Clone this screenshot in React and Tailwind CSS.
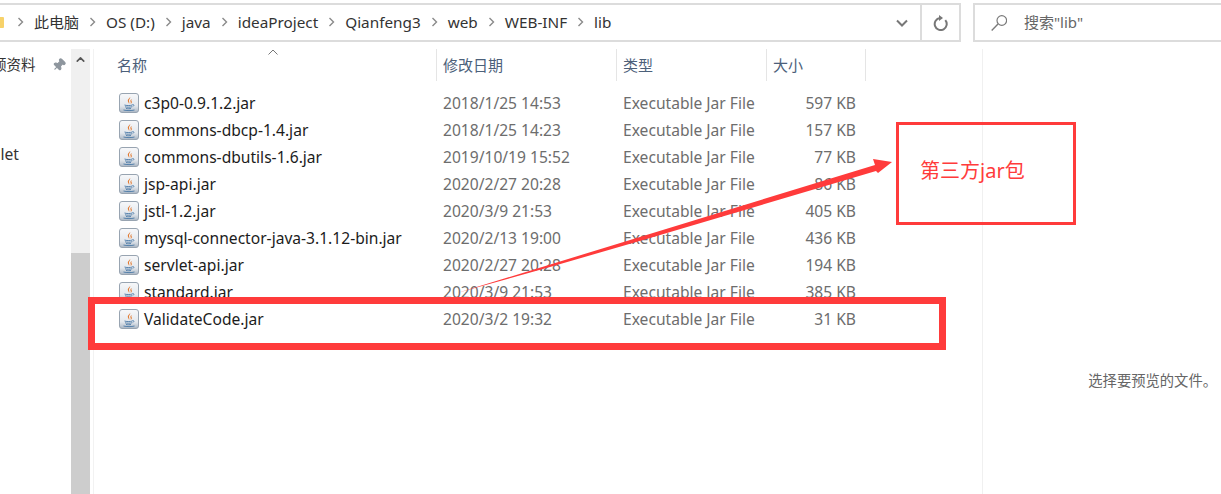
import { ChevronUp, Pin } from "lucide-react";

const files = [
  { name: "c3p0-0.9.1.2.jar", date: "2018/1/25 14:53", size: "597 KB" },
  { name: "commons-dbcp-1.4.jar", date: "2018/1/25 14:23", size: "157 KB" },
  { name: "commons-dbutils-1.6.jar", date: "2019/10/19 15:52", size: "77 KB" },
  { name: "jsp-api.jar", date: "2020/2/27 20:28", size: "86 KB" },
  { name: "jstl-1.2.jar", date: "2020/3/9 21:53", size: "405 KB" },
  { name: "mysql-connector-java-3.1.12-bin.jar", date: "2020/2/13 19:00", size: "436 KB" },
  { name: "servlet-api.jar", date: "2020/2/27 20:28", size: "194 KB" },
  { name: "standard.jar", date: "2020/3/9 21:53", size: "385 KB" },
  { name: "ValidateCode.jar", date: "2020/3/2 19:32", size: "31 KB" },
];

const crumbs = ["OS (D:)", "java", "ideaProject", "Qianfeng3", "web", "WEB-INF", "lib"];

function Crumb() {
  return (
    <span className="flex w-[27px] justify-center">
      <svg width="7" height="10" viewBox="0 0 7 10" fill="none" stroke="#8a8a8a" strokeWidth="1.4">
        <path d="M1.5 1l4 4-4 4" />
      </svg>
    </span>
  );
}

function JarIcon() {
  return (
    <svg width="20" height="20" viewBox="0 0 20 20" className="shrink-0">
      <defs>
        <linearGradient id="jarbg" x1="0" y1="0" x2="0" y2="1">
          <stop offset="0" stopColor="#f7f8fa" />
          <stop offset="0.65" stopColor="#e4e8ed" />
          <stop offset="1" stopColor="#aab6c4" />
        </linearGradient>
      </defs>
      <rect x="0.5" y="0.5" width="19" height="19" rx="2.5" fill="url(#jarbg)" stroke="#98a4b1" />
      <path d="M11 3c1 2-3 3-2 5.500 .4 1 1 1.500 1 2.500 1-1.500-.5-2.500 0-4 .4-1.200 1.800-2 1-4zM13 6c-1.500 .8-2 1.500-1.300 3 .3 .7 .2 1.300-.2 2 1.500-1 1.500-2 1-3-.4-.8-.2-1.300 .5-2z" fill="#e2762a" />
      <path d="M5.500 12c1.500 .7 6 .7 8 0M6 13.800c1.500 .5 5 .5 7 0M7 15.500c1.500 .3 4 .3 5 0M4.500 17c3 .8 8 .8 11 0M13.500 11.500c1.500-.3 2 1.300 .2 2" fill="none" stroke="#4a78a6" strokeWidth="0.9" />
    </svg>
  );
}

export default function App() {
  return (
    <div className="relative h-[494px] w-[1221px] overflow-hidden bg-white font-['Noto_Sans','Noto_Sans_CJK_SC',sans-serif] text-[15px]">
      {/* address + search */}
      <div className="flex h-[42px] pt-[3px] text-[#333]">
        <div className="flex w-[961px] items-center border-y-2 border-r-2 border-[#dcdcdc]">
          <div className="h-[11px] w-[4px] rounded-r-[1px] bg-[#f7d26a]"></div>
          <div className="ml-[3px] flex items-center">
            <Crumb />
            <span className="leading-none">此电脑</span>
            <Crumb />
            {crumbs.map((c, i) => (
              <div key={c} className="flex items-center text-[15.3px] leading-none">
                <span>{c}</span>
                {i < crumbs.length - 1 && <Crumb />}
              </div>
            ))}
          </div>
          <div className="ml-auto flex h-full items-center">
            <svg width="12" height="8" viewBox="0 0 12 8" fill="none" stroke="#777" strokeWidth="2" className="mr-[12px]">
              <path d="M1 1.500l5 5 5-5" />
            </svg>
            <div className="flex h-full w-[39px] items-center justify-center border-l-2 border-[#dcdcdc]">
              <svg width="16" height="16" viewBox="0 0 16 16" fill="none" stroke="#777" strokeWidth="2">
                <path d="M12.300 5.200A6 6 0 1 1 7 3.100" />
                <polygon points="6,0 10,3 6,6" fill="#777" stroke="none" />
              </svg>
            </div>
          </div>
        </div>
        <div className="ml-[12px] flex flex-1 items-center border-y-2 border-l-2 border-[#dcdcdc] pl-[16px] text-[#666]">
          <svg width="16" height="16" viewBox="0 0 16 16" fill="none" stroke="#7a7a7a" strokeWidth="1.2">
            <circle cx="10.800" cy="5.500" r="4.800" />
            <path d="M7 9L.700 15.400" strokeWidth="1.400" />
          </svg>
          <span className="ml-[17px]">搜索"lib"</span>
        </div>
      </div>

      <div className="flex h-[452px]">
        {/* nav pane, clipped */}
        <div className="w-[71px] overflow-hidden text-[#333]">
          <div className="mt-[12px] flex h-[22px] items-center">
            <span className="-ml-[8px] w-[60px] shrink-0 whitespace-nowrap text-[14.5px]">频资料</span>
            <Pin size={14} className="shrink-0 rotate-45 fill-[#8e969e] text-[#8e969e]" />
          </div>
          <div className="mt-[68px] flex h-[22px] w-[19px] items-center justify-end text-[15.6px]">let</div>
        </div>

        <div className="mt-[7px] flex w-[19px] flex-col bg-[#f0f0f0]">
          <div className="flex h-[204px] justify-center pt-[4px]">
            <ChevronUp size={13} strokeWidth={3} className="text-[#555]" />
          </div>
          <div className="flex-1 bg-[#cdcdcd]"></div>
        </div>

        {/* file list */}
        <div className="ml-[3px] mt-[7px] w-[889px] border-l border-[#f2f2f2]">
          <div className="relative flex h-[32px] items-center text-[#4c607a]">
            <svg width="10" height="6" viewBox="0 0 10 6" fill="none" stroke="#777" className="absolute left-[174px] top-[0px]">
              <path d="M.5 5.500L5 1l4.500 4.500" />
            </svg>
            <div className="w-[342px] pl-[23px]">名称</div>
            <div className="h-full w-[180px] border-l border-[#e5e5e5] pl-[6px] leading-[32px]">修改日期</div>
            <div className="h-full w-[150px] border-l border-[#e5e5e5] pl-[6px] leading-[32px]">类型</div>
            <div className="h-full w-[100px] border-x border-[#e5e5e5] pl-[6px] leading-[32px]">大小</div>
          </div>
          <div className="mt-[9px] text-[15.6px]">
            {files.map((f) => (
              <div key={f.name} className="flex h-[27px] items-center">
                <div className="flex w-[349px] items-center gap-[5px] pl-[25px] text-[#1c1c1c]">
                  <JarIcon />
                  <span>{f.name}</span>
                </div>
                <div className="w-[180px] text-[#6d6d6d]">{f.date}</div>
                <div className="w-[143px] text-[#6d6d6d]">Executable Jar File</div>
                <div className="w-[90px] text-right text-[#6d6d6d]">{f.size}</div>
              </div>
            ))}
          </div>
        </div>

        {/* preview pane */}
        <div className="mt-[7px] flex flex-1 items-start justify-end border-l border-[#f0f0f0] pr-[4px]">
          <span className="mt-[321px] text-[14.300px] leading-[22px] text-[#666]">选择要预览的文件。</span>
        </div>
      </div>

      {/* screenshot annotations */}
      <div className="absolute left-[88px] top-[297px] h-[53px] w-[858px] border-[7px] border-[#ff3b3b]"></div>
      <div className="absolute left-[896px] top-[122px] flex h-[103px] w-[180px] items-center border-[3px] border-[#ff3b3b] pb-[6px] pl-[21px] text-[20px] text-[#ff3b3b]">
        第三方jar包
      </div>
      <svg className="absolute left-0 top-0" width="1221" height="494" fill="#ff3b3b">
        <polygon points="457,293 875,165 873,159 892,162 878,173 876,171 650,238 550,267" />
      </svg>
    </div>
  );
}
